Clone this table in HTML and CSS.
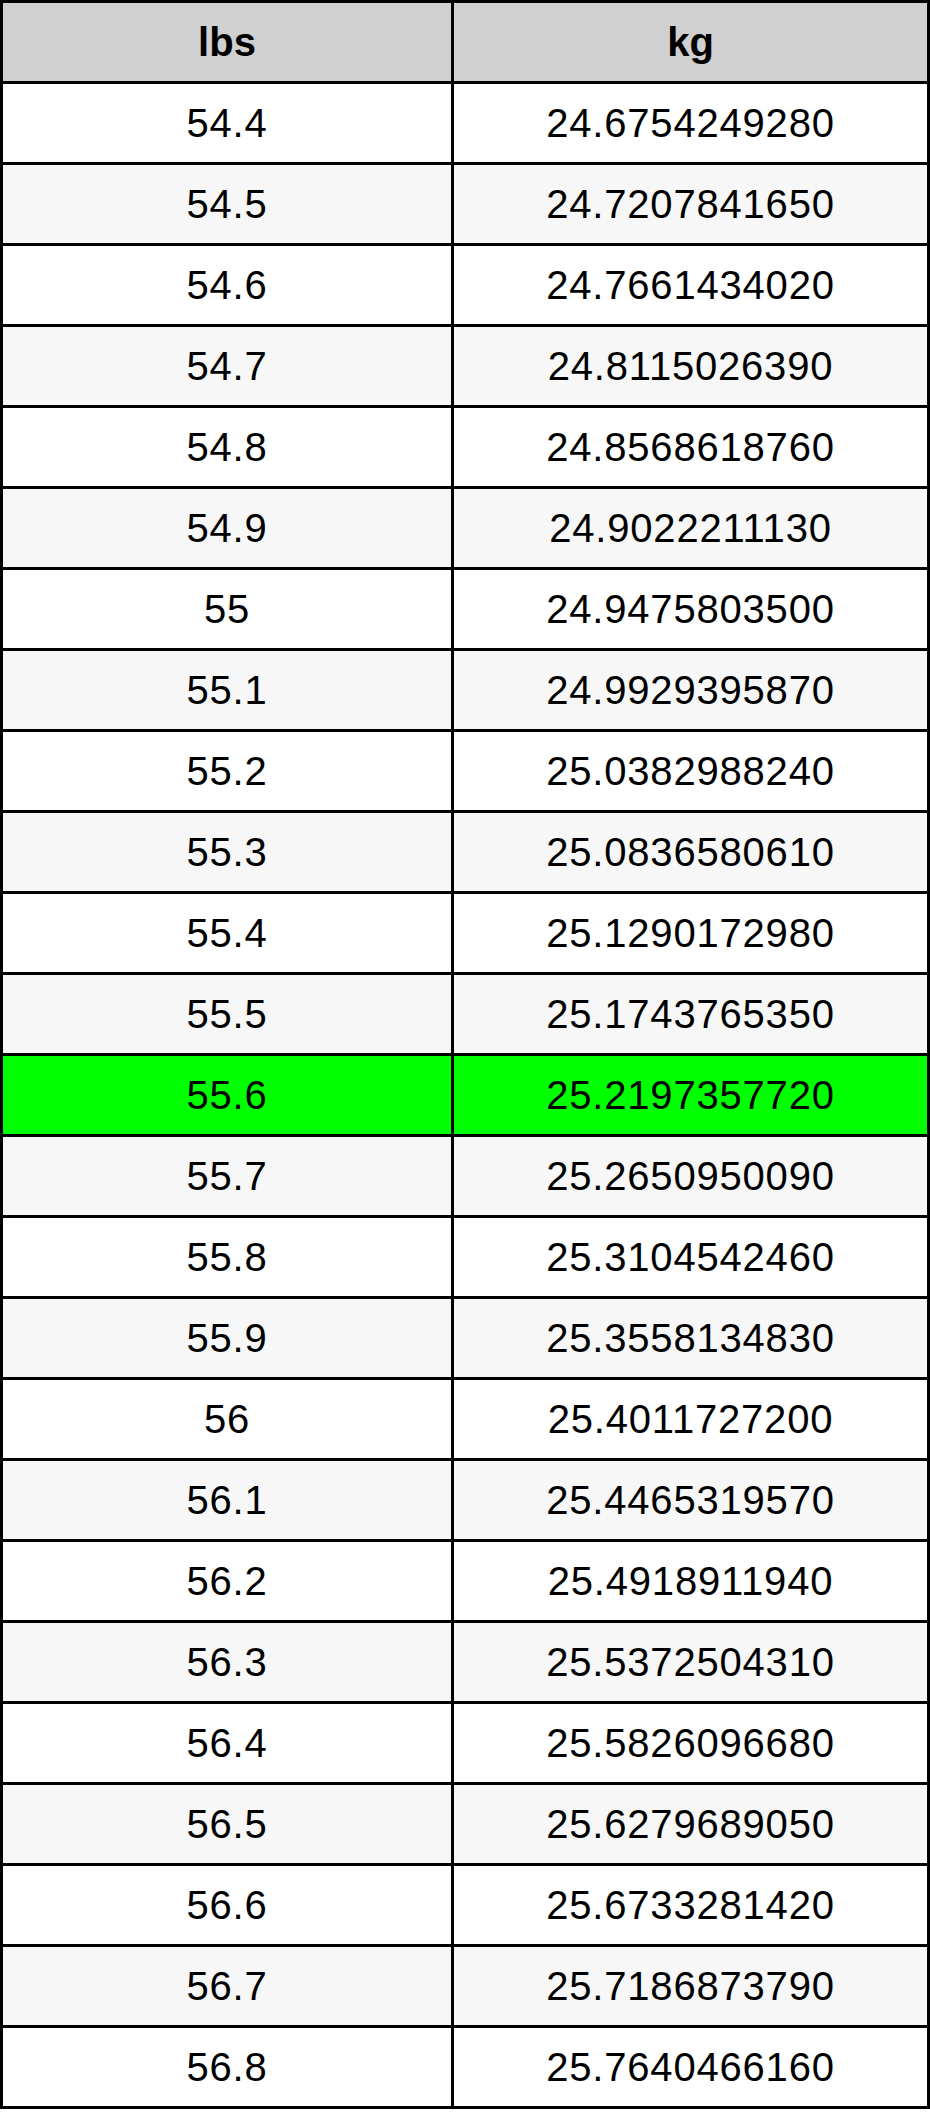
FILE: index.html
```html
<!DOCTYPE html>
<html>
<head>
<meta charset="utf-8">
<link rel="stylesheet" href="styles.css">
</head>
<body>
<table class="conv">
<colgroup><col class="c-lbs"><col class="c-kg"></colgroup>
<thead>
<tr><th>lbs</th><th>kg</th></tr>
</thead>
<tbody>
<tr><td>54.4</td><td>24.6754249280</td></tr>
<tr><td>54.5</td><td>24.7207841650</td></tr>
<tr><td>54.6</td><td>24.7661434020</td></tr>
<tr><td>54.7</td><td>24.8115026390</td></tr>
<tr><td>54.8</td><td>24.8568618760</td></tr>
<tr><td>54.9</td><td>24.9022211130</td></tr>
<tr><td>55</td><td>24.9475803500</td></tr>
<tr><td>55.1</td><td>24.9929395870</td></tr>
<tr><td>55.2</td><td>25.0382988240</td></tr>
<tr><td>55.3</td><td>25.0836580610</td></tr>
<tr><td>55.4</td><td>25.1290172980</td></tr>
<tr><td>55.5</td><td>25.1743765350</td></tr>
<tr class="hl"><td>55.6</td><td>25.2197357720</td></tr>
<tr><td>55.7</td><td>25.2650950090</td></tr>
<tr><td>55.8</td><td>25.3104542460</td></tr>
<tr><td>55.9</td><td>25.3558134830</td></tr>
<tr><td>56</td><td>25.4011727200</td></tr>
<tr><td>56.1</td><td>25.4465319570</td></tr>
<tr><td>56.2</td><td>25.4918911940</td></tr>
<tr><td>56.3</td><td>25.5372504310</td></tr>
<tr><td>56.4</td><td>25.5826096680</td></tr>
<tr><td>56.5</td><td>25.6279689050</td></tr>
<tr><td>56.6</td><td>25.6733281420</td></tr>
<tr><td>56.7</td><td>25.7186873790</td></tr>
<tr><td>56.8</td><td>25.7640466160</td></tr>
</tbody>
</table>
</body>
</html>
```
FILE: styles.css
```css
html, body {
  margin: 0;
  padding: 0;
  background: #ffffff;
}
.conv {
  width: 930px;
  border-collapse: collapse;
  table-layout: fixed;
  font-family: "Liberation Sans", Arial, sans-serif;
  font-size: 40px;
  color: #000;
}
.c-lbs { width: 451px; }
.c-kg { width: 476px; }
.conv tr {
  height: 81px;
}
.conv th, .conv td {
  border: 3px solid #000;
  padding: 0;
  text-align: center;
  vertical-align: middle;
}
.conv th {
  background: #d0d0d0;
  font-weight: bold;
}
.conv td {
  letter-spacing: 0.8px;
}
.conv tbody tr:nth-child(odd) { background: #ffffff; }
.conv tbody tr:nth-child(even) { background: #f7f7f7; }
.conv tbody tr.hl { background: #00ff00; }
```
